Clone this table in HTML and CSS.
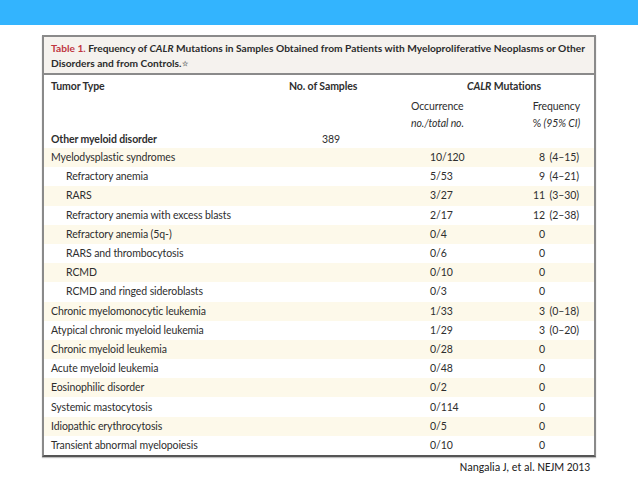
FILE: index.html
```html
<!DOCTYPE html>
<html lang="en">
<head>
  <meta charset="UTF-8" />
  <meta name="viewport" content="width=device-width, initial-scale=1.0"/>
  <title>CALR Mutations</title>
  <link rel="stylesheet" href="styles.css">
</head>
<body>
  <div class="topbar"></div>
  <div class="slide">
    <div class="tbox">
      <div class="ttitle"><span class="tnum">Table 1.</span> Frequency of <i>CALR</i> Mutations in Samples Obtained from Patients with Myeloproliferative Neoplasms or Other<br>Disorders and from Controls.<span class="star">&#9734;</span></div>
      <table class="data">
        <colgroup>
          <col class="c-type">
          <col class="c-samp">
          <col class="c-occ">
          <col class="c-freq">
        </colgroup>
        <thead>
          <tr class="h1">
            <th>Tumor Type</th>
            <th class="samp">No. of Samples</th>
            <th colspan="2" class="calr"><i>CALR</i> Mutations</th>
          </tr>
          <tr class="h2">
            <td></td><td></td>
            <td class="occ-h">Occurrence</td>
            <td class="freq-h">Frequency</td>
          </tr>
          <tr class="h3">
            <td></td><td></td>
            <td class="occ-h"><i>no./total no.</i></td>
            <td class="freq-h">% <i>(95% CI)</i></td>
          </tr>
          <tr class="h4">
            <th>Other myeloid disorder</th>
            <td class="n389">389</td>
            <td></td><td></td>
          </tr>
        </thead>
        <tbody>
          <tr><td>Myelodysplastic syndromes</td><td></td><td class="occ">10/120</td><td class="freq"><span class="v">8</span> (4–15)</td></tr>
          <tr><td class="sub">Refractory anemia</td><td></td><td class="occ">5/53</td><td class="freq"><span class="v">9</span> (4–21)</td></tr>
          <tr><td class="sub">RARS</td><td></td><td class="occ">3/27</td><td class="freq"><span class="v">11</span> (3–30)</td></tr>
          <tr><td class="sub">Refractory anemia with excess blasts</td><td></td><td class="occ">2/17</td><td class="freq"><span class="v">12</span> (2–38)</td></tr>
          <tr><td class="sub">Refractory anemia (5q-)</td><td></td><td class="occ">0/4</td><td class="freq"><span class="v">0</span></td></tr>
          <tr><td class="sub">RARS and thrombocytosis</td><td></td><td class="occ">0/6</td><td class="freq"><span class="v">0</span></td></tr>
          <tr><td class="sub">RCMD</td><td></td><td class="occ">0/10</td><td class="freq"><span class="v">0</span></td></tr>
          <tr><td class="sub">RCMD and ringed sideroblasts</td><td></td><td class="occ">0/3</td><td class="freq"><span class="v">0</span></td></tr>
          <tr><td>Chronic myelomonocytic leukemia</td><td></td><td class="occ">1/33</td><td class="freq"><span class="v">3</span> (0–18)</td></tr>
          <tr><td>Atypical chronic myeloid leukemia</td><td></td><td class="occ">1/29</td><td class="freq"><span class="v">3</span> (0–20)</td></tr>
          <tr><td>Chronic myeloid leukemia</td><td></td><td class="occ">0/28</td><td class="freq"><span class="v">0</span></td></tr>
          <tr><td>Acute myeloid leukemia</td><td></td><td class="occ">0/48</td><td class="freq"><span class="v">0</span></td></tr>
          <tr><td>Eosinophilic disorder</td><td></td><td class="occ">0/2</td><td class="freq"><span class="v">0</span></td></tr>
          <tr><td>Systemic mastocytosis</td><td></td><td class="occ">0/114</td><td class="freq"><span class="v">0</span></td></tr>
          <tr><td>Idiopathic erythrocytosis</td><td></td><td class="occ">0/5</td><td class="freq"><span class="v">0</span></td></tr>
          <tr><td>Transient abnormal myelopoiesis</td><td></td><td class="occ">0/10</td><td class="freq"><span class="v">0</span></td></tr>
        </tbody>
      </table>
    </div>
    <div class="cite">Nangalia J, et al. NEJM 2013</div>
  </div>
</body>
</html>
```

FILE: styles.css
```css
* {
  box-sizing: border-box;
  margin: 0;
  padding: 0;
}

body {
  background: #fff;
  color: #2e2e2e;
  font-family: Lato, 'Open Sans', sans-serif;
  width: 638px;
  height: 478px;
  overflow: hidden;
}

.topbar {
  height: 25px;
  background: #33b4fe;
}

.slide {
  padding: 10px 0 0 42px;
}

.tbox {
  width: 554px;
  border: 2px solid #8a8a8a;
  border-bottom-color: #555;
  box-shadow: 0 1px 1px rgba(0, 0, 0, 0.25);
}

.ttitle {
  background: #f5f2ee;
  border-bottom: 2px solid #8a8a8a;
  padding: 4px 4px 3px 7px;
  font-size: 10.2px;
  line-height: 15px;
  font-weight: bold;
  color: #2b2b2b;
  height: 38px;
  white-space: nowrap;
}

.tnum {
  color: #c0363f;
}

.star {
  font-size: 7px;
  vertical-align: top;
  margin-left: 1px;
  color: #777;
}

.data {
  width: 100%;
  border-collapse: collapse;
  table-layout: fixed;
  font-size: 10.5px;
  letter-spacing: -0.1px;
}

.c-type { width: 236px; }
.c-samp { width: 102px; }
.c-occ { width: 120px; }
.c-freq { width: 92px; }

.data th,
.data td {
  text-align: left;
  white-space: nowrap;
  padding: 0;
  line-height: 13px;
}

.data th {
  font-weight: bold;
}

.data th:first-child,
.data td:first-child {
  padding-left: 7px;
}

.h1 {
  height: 23px;
}

.h1 .samp {
  padding-left: 9px;
}

.h1 .calr {
  padding-left: 85px;
}

.h2 {
  height: 17px;
}

.h3 {
  height: 16px;
}

.occ-h {
  padding-left: 29px !important;
}

.freq-h {
  text-align: right !important;
  padding-right: 14px !important;
}

.h4 {
  height: 17px;
}

.n389 {
  padding-left: 42px !important;
}

.data tbody tr {
  height: 19.2px;
}

.data tbody tr:nth-child(odd) {
  background: #fdf9ea;
}

.data td.sub {
  padding-left: 22px;
}

.occ {
  padding-left: 48px !important;
}

.freq .v {
  display: inline-block;
  width: 43px;
  margin-right: 2px;
  text-align: right;
}

.cite {
  width: 554px;
  text-align: right;
  padding: 3px 6px 0 0;
  font-family: Carlito, 'Open Sans', sans-serif;
  font-size: 11.5px;
  color: #222;
}
```
